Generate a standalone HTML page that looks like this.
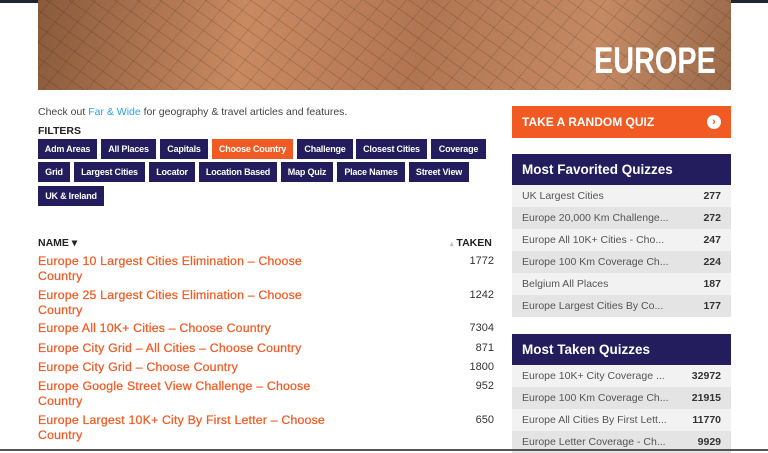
<!DOCTYPE html><html><head><style>
body{margin:0;width:768px;height:451px;overflow:hidden;background:#fff;font-family:"Liberation Sans",sans-serif;position:relative}
.a{position:absolute}
.banner{left:38px;top:0;width:693px;height:90px;background:linear-gradient(100deg,#8a5a3a,#c98a62 30%,#b27552 55%,#c58a64 80%,#9a6a4a);overflow:hidden}
.banner:after{content:"";position:absolute;inset:0;background:repeating-linear-gradient(35deg,rgba(40,30,20,.18) 0 1px,transparent 1px 13px),repeating-linear-gradient(-50deg,rgba(40,30,20,.15) 0 1px,transparent 1px 17px)}
.eu{left:594px;top:40px;color:#fff;font-size:37px;font-weight:bold;z-index:2;transform:scaleX(.78);transform-origin:left top}
.btn{position:absolute;height:20px;background:#231d5e;color:#fff;font-size:9px;font-weight:bold;line-height:20px;text-align:center;white-space:nowrap;letter-spacing:-.2px}
.or{background:#f15a22}
.item{position:absolute;left:38px;color:#f15a22;font-size:12.3px;line-height:15px;width:290px;letter-spacing:.2px;-webkit-text-stroke:.25px #f15a22}
.n{position:absolute;right:274px;font-size:11px;color:#333}
.rb{left:512px;width:219px}
.row{position:absolute;left:512px;width:219px;height:22px;font-size:10.5px;color:#555;line-height:22px}
.row span{position:absolute;left:10px}.row b{position:absolute;right:10px;color:#333}
</style></head><body>
<div class="a" style="left:0;top:0;width:768px;height:3px;background:#1e2632"></div>
<div class="a banner"></div><div class="a eu">EUROPE</div>
<div class="a" style="left:38px;top:106px;font-size:10.5px;color:#444">Check out <span style="color:#2aa3e0">Far &amp; Wide</span> for geography &amp; travel articles and features.</div>
<div class="a" style="left:38px;top:125px;font-size:10.5px;font-weight:bold;color:#222">FILTERS</div>
<div class="btn" style="left:38px;top:139px;width:59px">Adm Areas</div>
<div class="btn" style="left:101px;top:139px;width:55px">All Places</div>
<div class="btn" style="left:160px;top:139px;width:48px">Capitals</div>
<div class="btn or" style="left:212px;top:139px;width:81px">Choose Country</div>
<div class="btn" style="left:297px;top:139px;width:56px">Challenge</div>
<div class="btn" style="left:356px;top:139px;width:71px">Closest Cities</div>
<div class="btn" style="left:431px;top:139px;width:55px">Coverage</div>
<div class="btn" style="left:38px;top:162px;width:32px">Grid</div>
<div class="btn" style="left:74px;top:162px;width:71px">Largest Cities</div>
<div class="btn" style="left:149px;top:162px;width:46px">Locator</div>
<div class="btn" style="left:199px;top:162px;width:78px">Location Based</div>
<div class="btn" style="left:281px;top:162px;width:52px">Map Quiz</div>
<div class="btn" style="left:337px;top:162px;width:68px">Place Names</div>
<div class="btn" style="left:409px;top:162px;width:60px">Street View</div>
<div class="btn" style="left:38px;top:186px;width:66px">UK &amp; Ireland</div>
<div class="a" style="left:38px;top:237px;font-size:10.5px;font-weight:bold;color:#222">NAME ▾</div>
<div class="a" style="left:450px;top:237px;font-size:10.5px;font-weight:bold;color:#222"><span style="color:#bbb;font-size:7px">▴</span> TAKEN</div>
<div class="item" style="top:254px">Europe 10 Largest Cities Elimination – Choose Country</div><div class="n a" style="top:255px">1772</div>
<div class="item" style="top:288px">Europe 25 Largest Cities Elimination – Choose Country</div><div class="n a" style="top:289px">1242</div>
<div class="item" style="top:321px">Europe All 10K+ Cities – Choose Country</div><div class="n a" style="top:322px">7304</div>
<div class="item" style="top:341px">Europe City Grid – All Cities – Choose Country</div><div class="n a" style="top:342px">871</div>
<div class="item" style="top:360px">Europe City Grid – Choose Country</div><div class="n a" style="top:361px">1800</div>
<div class="item" style="top:379px">Europe Google Street View Challenge – Choose Country</div><div class="n a" style="top:380px">952</div>
<div class="item" style="top:413px">Europe Largest 10K+ City By First Letter – Choose Country</div><div class="n a" style="top:414px">650</div>
<div class="a rb" style="top:106px;height:32px;background:#f15a22;color:#fff;font-weight:bold;font-size:12px;line-height:32px"><span style="margin-left:10px">TAKE A RANDOM QUIZ</span><span style="position:absolute;right:10px;top:9px;width:14px;height:14px;border-radius:50%;background:#fff;color:#f15a22;font-size:11px;line-height:14px;text-align:center">›</span></div>
<div class="a rb" style="top:154px;height:31px;background:#231d5e;color:#fff;font-weight:bold;font-size:13.5px;line-height:31px"><span style="margin-left:10px">Most Favorited Quizzes</span></div>
<div class="row" style="top:185px;background:#f2f2f2"><span>UK Largest Cities</span><b>277</b></div>
<div class="row" style="top:207px;background:#e4e4e4"><span>Europe 20,000 Km Challenge...</span><b>272</b></div>
<div class="row" style="top:229px;background:#f2f2f2"><span>Europe All 10K+ Cities - Cho...</span><b>247</b></div>
<div class="row" style="top:251px;background:#e4e4e4"><span>Europe 100 Km Coverage Ch...</span><b>224</b></div>
<div class="row" style="top:273px;background:#f2f2f2"><span>Belgium All Places</span><b>187</b></div>
<div class="row" style="top:295px;background:#e4e4e4"><span>Europe Largest Cities By Co...</span><b>177</b></div>
<div class="a rb" style="top:334px;height:31px;background:#231d5e;color:#fff;font-weight:bold;font-size:13.5px;line-height:31px"><span style="margin-left:10px">Most Taken Quizzes</span></div>
<div class="row" style="top:365px;background:#f2f2f2"><span>Europe 10K+ City Coverage ...</span><b>32972</b></div>
<div class="row" style="top:387px;background:#e4e4e4"><span>Europe 100 Km Coverage Ch...</span><b>21915</b></div>
<div class="row" style="top:409px;background:#f2f2f2"><span>Europe All Cities By First Lett...</span><b>11770</b></div>
<div class="row" style="top:431px;background:#e4e4e4"><span>Europe Letter Coverage - Ch...</span><b>9929</b></div>
<div class="a" style="left:0;top:449px;width:768px;height:2px;background:#555"></div>
</body></html>
